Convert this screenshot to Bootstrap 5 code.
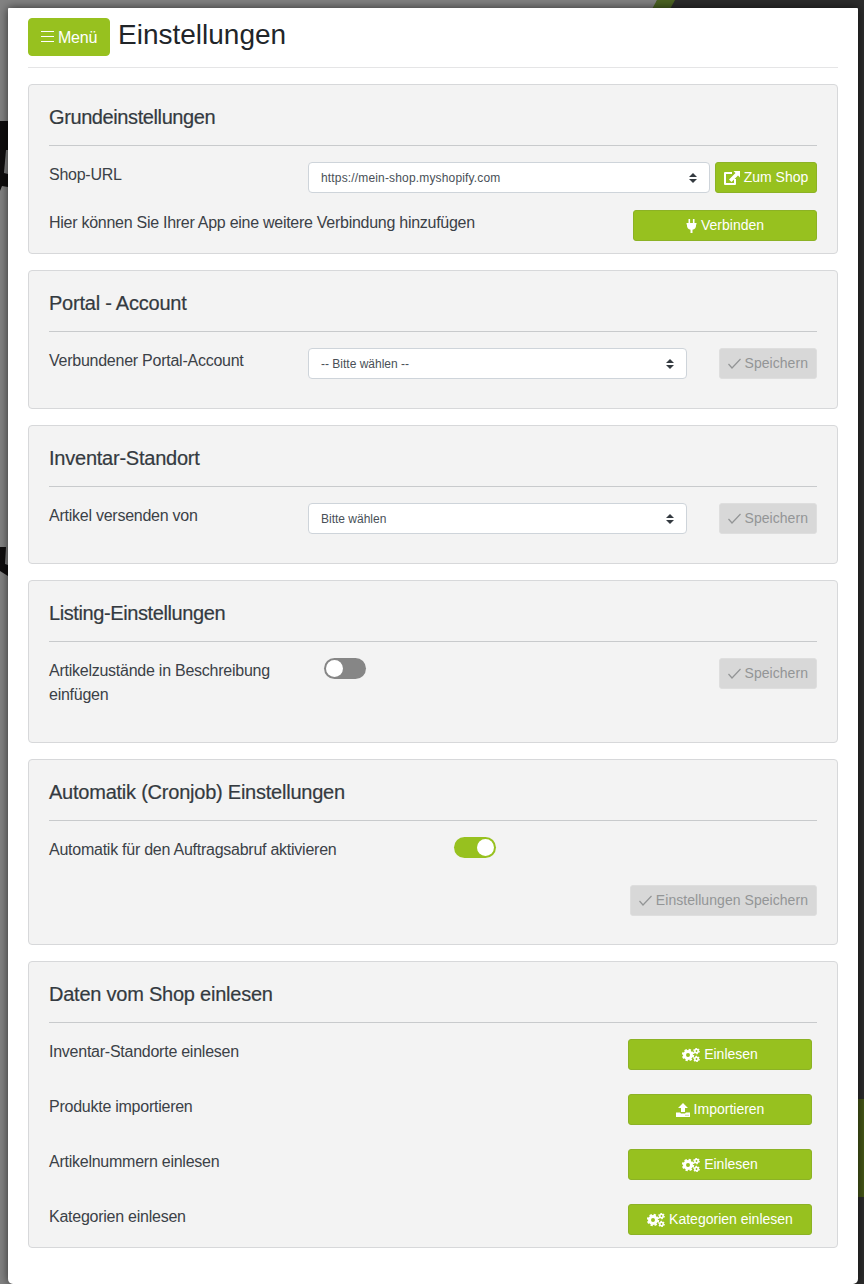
<!DOCTYPE html>
<html lang="de">
<head>
<meta charset="utf-8">
<meta name="viewport" content="width=device-width, initial-scale=1">
<title>Einstellungen</title>
<link href="https://cdn.jsdelivr.net/npm/bootstrap@5.3.0/dist/css/bootstrap.min.css" rel="stylesheet">
<style>
  body { font-family: "Liberation Sans", Arial, sans-serif; font-size: 16px; line-height: 24px; color: #343a40; background: #2c2c2c; height: 1284px; overflow: hidden; position: relative; }
  .backdrop-art { position: absolute; inset: 0; z-index: 0; }
  .sheet { position: relative; z-index: 1; width: 850px; height: 1276px; margin: 8px 0 0 8px; padding: 10px 20px 0; background: #fff; border-radius: 1px 1px 5px 5px; box-shadow: 0 0 10px rgba(0,0,0,.65); }
  .page-head { height: 50px; border-bottom: 1px solid #e5e5e6; margin-bottom: 16px; }
  .page-head h1 { font-size: 28px; line-height: 34px; font-weight: 400; color: #212529; margin: 0 0 0 8px; }
  .btn { --bs-btn-font-size: 14px; --bs-btn-line-height: 21px; --bs-btn-padding-y: 4px; --bs-btn-padding-x: 8px; --bs-btn-border-radius: 3px; height: 31px; font-weight: 300; white-space: nowrap; display: inline-flex; align-items: center; justify-content: center; gap: 4px; }
  .btn-lime { --bs-btn-color: #fff; --bs-btn-bg: #97c11f; --bs-btn-border-color: #8cb225; --bs-btn-hover-color: #fff; --bs-btn-hover-bg: #86ac1b; }
  .btn-menu { --bs-btn-font-size: 16px; --bs-btn-border-color: #97c11f; --bs-btn-border-radius: 4px; width: 82px; height: 38px; letter-spacing: -.2px; }
  .btn-grey { --bs-btn-disabled-color: #939596; --bs-btn-disabled-bg: #d8d8d8; --bs-btn-disabled-border-color: #dedede; --bs-btn-disabled-opacity: 1; letter-spacing: .05px; }
  .btn-wide { width: 184px; }
  .btn-shop { width: 102px; }
  .btn svg { flex: none; }
  .card { --bs-card-bg: #f3f3f3; --bs-card-border-color: #d7d8da; --bs-card-border-radius: 4px; --bs-card-color: #3b4147; margin-bottom: 16px; }
  .card-body { padding: 20px; }
  .card h2 { font-size: 20px; line-height: 24px; font-weight: 400; margin: 0; color: #343a40; letter-spacing: -.23px; -webkit-text-stroke: .2px #343a40; }
  .card h2.title-tight { letter-spacing: -.4px; }
  .card hr { margin: 16px 0; opacity: 1; border-color: #c8cacc; }
  .field-name { width: 259px; flex: none; letter-spacing: -.25px; padding-top: 1px; }
  .field-name.w-auto { letter-spacing: -.27px; }
  .line-a { height: 48px; }
  .line-b { height: 23px; }
  .line-c { height: 40px; }
  .line-tall { height: 64px; }
  .line-d { height: 39px; }
  .line-e { height: 55px; padding-right: 5px; }
  .line-e:last-child { height: 23px; }
  .form-select { height: 31px; padding: 5px 28px 3px 12px; font-size: 12px; line-height: 21px; border-color: #ced4da; border-radius: 4px; color: #495057; background-image: url("data:image/svg+xml,%3csvg xmlns='http://www.w3.org/2000/svg' viewBox='0 0 4 5'%3e%3cpath fill='%23343a40' d='M2 0L0 2h4zm0 5L0 3h4z'/%3e%3c/svg%3e"); background-size: 8px 10px; background-position: right 12px center; }
  .pick-shop { width: 402px; letter-spacing: .16px; }
  .pick { width: 379px; }
  .toggle-pill { width: 42px; height: 21px; border-radius: 11px; background: #868686; padding: 2px; flex: none; display: flex; }
  .toggle-pill::before { content: ""; width: 17px; height: 17px; border-radius: 50%; background: #fff; }
  .toggle-pill.is-on { background: #97c11f; justify-content: flex-end; }
  .toggle-indent { margin-left: 16px; }
  .auto-name { width: 405px; }
</style>
</head>
<body>
<svg class="backdrop-art" width="864" height="1284" viewBox="0 0 864 1284" aria-hidden="true">
  <path fill="#828282" d="M0 0h657L400 1284H0z"/>
  <path fill="#4b6322" d="M657 0h18l-6 11h-18z"/>
  <path fill="#0f0d0e" d="M0 121h8v66l-6-1-2 5zM0 547h6l-1 17 3 1v11l-8-5z"/>
  <path fill="#828282" d="M6 150h2v24l-4-1z"/>
  <path fill="#465717" d="M850 1099h14v98h-14z"/>
</svg>
<svg class="d-none" aria-hidden="true">
  <symbol id="i-check" viewBox="0 0 13 11"><path d="M.5 6l3.500 4L12.500 1" fill="none" stroke="currentColor" stroke-width="1.200"/></symbol>
  <symbol id="i-cogs" viewBox="0 0 18 14">
    <g fill="none" stroke="currentColor">
      <circle cx="6" cy="7" r="3.500" stroke-width="3"/>
      <circle cx="6" cy="7" r="5.200" stroke-width="2" stroke-dasharray="2.300 1.784"/>
      <circle cx="14.500" cy="3" r="1.700" stroke-width="1.600"/>
      <circle cx="14.500" cy="3" r="2.700" stroke-width="1.200" stroke-dasharray="1.500 1.327"/>
      <circle cx="14.500" cy="11" r="1.700" stroke-width="1.600"/>
      <circle cx="14.500" cy="11" r="2.700" stroke-width="1.200" stroke-dasharray="1.500 1.327"/>
    </g>
  </symbol>
</svg>
<main class="sheet">
  <header class="page-head d-flex align-items-start">
    <button class="btn btn-lime btn-menu"><svg width="13" height="12" viewBox="0 0 13 12" stroke="currentColor"><path d="M0 .5h13M0 5.500h13M0 10.500h13"/></svg>Menü</button>
    <h1>Einstellungen</h1>
  </header>

  <section class="card"><div class="card-body">
    <h2 class="title-tight">Grundeinstellungen</h2><hr>
    <div class="line-a d-flex align-items-start">
      <div class="field-name">Shop-URL</div>
      <select class="form-select pick-shop"><option>https://mein-shop.myshopify.com</option></select>
      <button class="btn btn-lime btn-shop ms-auto"><svg width="16" height="14" viewBox="0 0 16 14"><path d="M8 2H1v11h10V8" fill="none" stroke="currentColor" stroke-width="2" stroke-linejoin="round"/><path d="M9.500 0H16v6.500l-2-2-6.500 6.500-2.500-2.500L11.500 2z" fill="currentColor"/></svg>Zum Shop</button>
    </div>
    <div class="line-b d-flex align-items-start justify-content-between">
      <div class="field-name w-auto">Hier können Sie Ihrer App eine weitere Verbindung hinzufügen</div>
      <button class="btn btn-lime btn-wide"><svg width="11" height="14" viewBox="0 0 10 14" fill="currentColor"><path d="M2 0h1.600v4h2.800V0H8v4h2v1.500H9.500V7c0 2-1.500 3.300-3.500 3.700V14H4v-3.300C2 10.300.5 9 .5 7V5.500H0V4h2z"/></svg>Verbinden</button>
    </div>
  </div></section>

  <section class="card"><div class="card-body">
    <h2>Portal - Account</h2><hr>
    <div class="line-c d-flex align-items-start">
      <div class="field-name">Verbundener Portal-Account</div>
      <select class="form-select pick"><option>-- Bitte wählen --</option></select>
      <button class="btn btn-grey ms-auto" disabled><svg width="13" height="11"><use href="#i-check"/></svg>Speichern</button>
    </div>
  </div></section>

  <section class="card"><div class="card-body">
    <h2>Inventar-Standort</h2><hr>
    <div class="line-c d-flex align-items-start">
      <div class="field-name">Artikel versenden von</div>
      <select class="form-select pick"><option>Bitte wählen</option></select>
      <button class="btn btn-grey ms-auto" disabled><svg width="13" height="11"><use href="#i-check"/></svg>Speichern</button>
    </div>
  </div></section>

  <section class="card"><div class="card-body">
    <h2 class="title-tight">Listing-Einstellungen</h2><hr>
    <div class="line-tall d-flex align-items-start">
      <div class="field-name">Artikelzustände in Beschreibung<br>einfügen</div>
      <span class="toggle-pill toggle-indent" role="switch" aria-checked="false"></span>
      <button class="btn btn-grey ms-auto" disabled><svg width="13" height="11"><use href="#i-check"/></svg>Speichern</button>
    </div>
  </div></section>

  <section class="card"><div class="card-body">
    <h2>Automatik (Cronjob) Einstellungen</h2><hr>
    <div class="line-a d-flex align-items-start">
      <div class="field-name auto-name">Automatik für den Auftragsabruf aktivieren</div>
      <span class="toggle-pill is-on" role="switch" aria-checked="true"></span>
    </div>
    <div class="line-d d-flex align-items-start justify-content-end">
      <button class="btn btn-grey" disabled><svg width="13" height="11"><use href="#i-check"/></svg>Einstellungen Speichern</button>
    </div>
  </div></section>

  <section class="card"><div class="card-body">
    <h2>Daten vom Shop einlesen</h2><hr>
    <div class="line-e d-flex align-items-start justify-content-between">
      <div class="field-name">Inventar-Standorte einlesen</div>
      <button class="btn btn-lime btn-wide"><svg width="18" height="14"><use href="#i-cogs"/></svg>Einlesen</button>
    </div>
    <div class="line-e d-flex align-items-start justify-content-between">
      <div class="field-name">Produkte importieren</div>
      <button class="btn btn-lime btn-wide"><svg width="14" height="14" viewBox="0 0 14 14" fill="currentColor"><path d="M7 0l5 5H9v4H5V5H2z"/><path d="M0 9.500h4l1 1h4l1-1h4V14H0zm9.500 2.200v1h1v-1zm2 0v1h1v-1z" fill-rule="evenodd"/></svg>Importieren</button>
    </div>
    <div class="line-e d-flex align-items-start justify-content-between">
      <div class="field-name">Artikelnummern einlesen</div>
      <button class="btn btn-lime btn-wide"><svg width="18" height="14"><use href="#i-cogs"/></svg>Einlesen</button>
    </div>
    <div class="line-e d-flex align-items-start justify-content-between">
      <div class="field-name">Kategorien einlesen</div>
      <button class="btn btn-lime btn-wide"><svg width="18" height="14"><use href="#i-cogs"/></svg>Kategorien einlesen</button>
    </div>
  </div></section>
</main>
<script src="https://cdn.jsdelivr.net/npm/bootstrap@5.3.0/dist/js/bootstrap.bundle.min.js"></script>
</body>
</html>
